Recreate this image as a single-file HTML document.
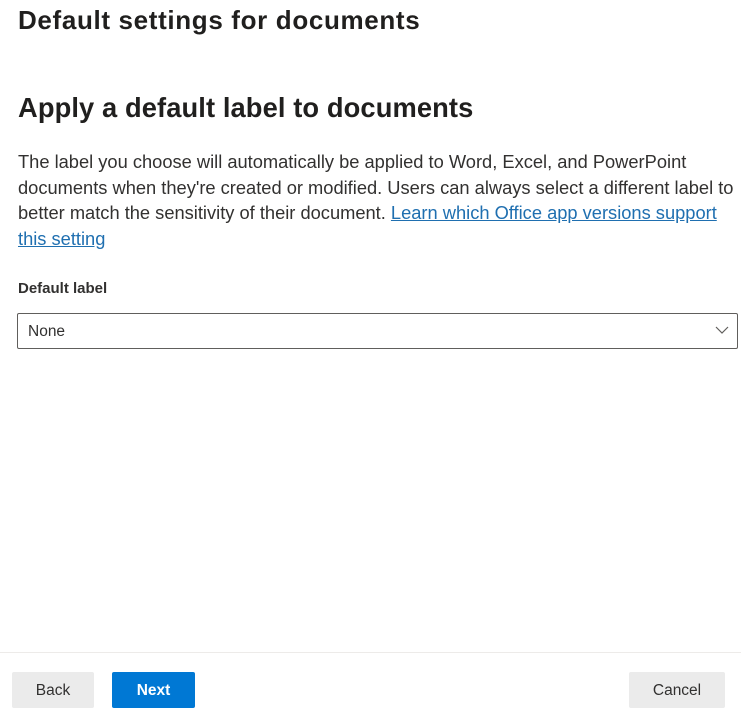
<!DOCTYPE html>
<html><head><style>
body{margin:0;width:741px;height:716px;background:#fff;font-family:"Liberation Sans",sans-serif;color:#323130;position:relative;overflow:hidden}
.a{position:absolute;left:18px;white-space:nowrap}
h1{position:absolute;left:18px;top:5px;margin:0;font-size:26px;font-weight:bold;color:#201f1e;letter-spacing:0.65px}
h2{position:absolute;left:18px;top:92px;margin:0;font-size:27.3px;font-weight:bold;color:#201f1e;letter-spacing:0.1px}
.p{top:149px;font-size:18.3px;line-height:25.5px;color:#323130;letter-spacing:0px}
.p a{color:#1f6fb0;text-decoration:underline}
.lbl{top:280px;font-size:15px;font-weight:bold}
.sel{position:absolute;left:17px;top:313px;width:719px;height:34px;border:1px solid #605e5c;border-radius:2px}
.sel span{position:absolute;left:10px;top:9px;font-size:15.5px}
.sel svg{position:absolute;right:8px;top:11px}
.line{position:absolute;left:0;top:652px;width:741px;height:1px;background:#edebe9}
.btn{position:absolute;top:672px;height:36px;border-radius:2px;font-size:15.5px;text-align:center;line-height:38px}
</style></head><body>
<h1>Default settings for documents</h1>
<h2>Apply a default label to documents</h2>
<div class="a p">The label you choose will automatically be applied to Word, Excel, and PowerPoint<br>documents when they're created or modified. Users can always select a different label to<br>better match the sensitivity of their document. <a>Learn which Office app versions support</a><br><a>this setting</a></div>
<div class="a lbl">Default label</div>
<div class="sel"><span>None</span><svg width="14" height="10" viewBox="0 0 14 10"><path d="M1 2l6 6 6-6" fill="none" stroke="#605e5c" stroke-width="1.2"/></svg></div>
<div class="line"></div>
<div class="btn" style="left:12px;width:82px;background:#ebebeb;color:#323130">Back</div>
<div class="btn" style="left:112px;width:83px;background:#0078d4;color:#fff;font-weight:bold">Next</div>
<div class="btn" style="left:629px;width:96px;background:#ebebeb;color:#323130">Cancel</div>
</body></html>
